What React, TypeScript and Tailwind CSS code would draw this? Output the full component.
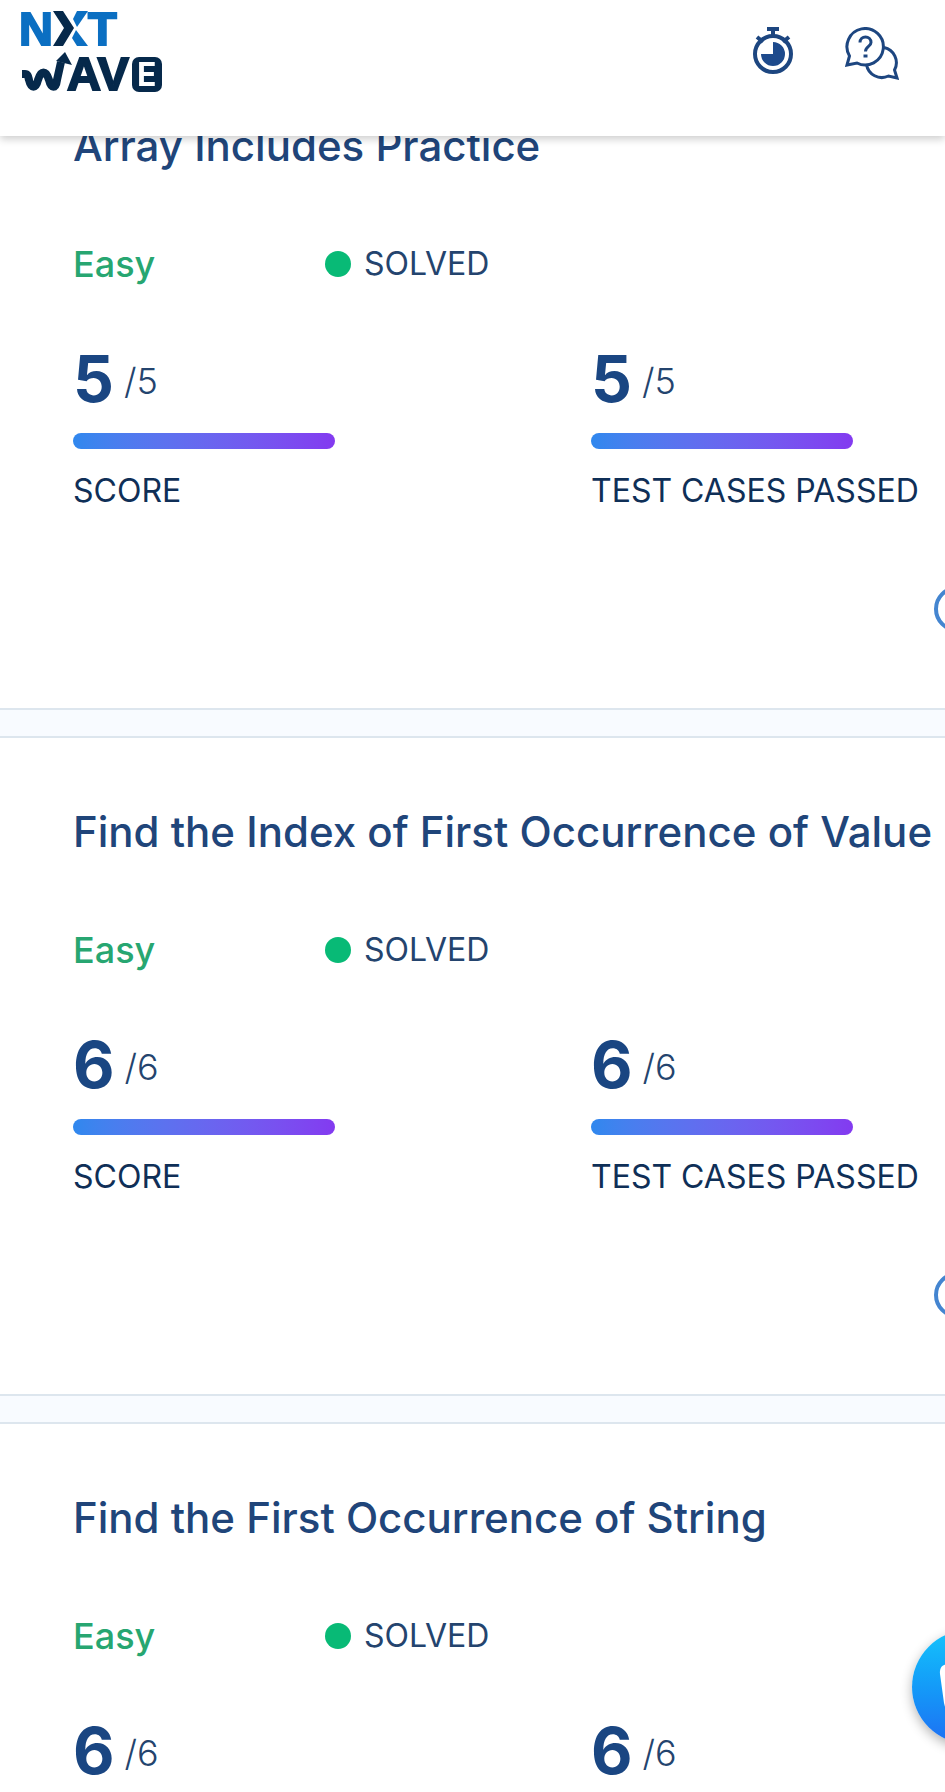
import type { ReactNode } from "react";

const challenges = [
   { title: "Array Includes Practice", level: "Easy", status: "SOLVED", score: 5, cases: 5 },
   { title: "Find the Index of First Occurrence of Value", level: "Easy", status: "SOLVED", score: 6, cases: 6 },
   { title: "Find the First Occurrence of String", level: "Easy", status: "SOLVED", score: 6, cases: 6 },
];

const Logo = () => (
   <svg width="170" height="110" viewBox="0 0 170 110" role="img" aria-label="NXT Wave">
      <g fontFamily="'Liberation Sans', Arial, sans-serif" fontWeight="700" fontSize="47" strokeWidth="2">
         <text x="19" y="45" fill="#0b6fc2" stroke="#0b6fc2">N</text>
         <text x="88" y="45" fill="#0b6fc2" stroke="#0b6fc2">T</text>
         <text x="67" y="90" fill="#06294b" stroke="#06294b">AV</text>
      </g>
      <path d="M53 11h10l11 17-11 18H53l11-18z" fill="#06294b" />
      <path d="M77 11h11L77 27l-4-8zM76 30l12 16H77l-5-8z" fill="#0b6fc2" />
      <path
         d="M22 74h3c3 0 3 2 4 6 2 9 7 9 9 0 3-10 8-10 11 0 2 9 7 9 8 0l4-18"
         fill="none"
         stroke="#06294b"
         strokeWidth="8"
      />
      <path d="M65 52l7 13-16-4z" fill="#06294b" />
      <rect x="132" y="57" width="30" height="35" rx="7" fill="#06294b" />
      <text x="137" y="86" fill="#fff" fontFamily="Inter, sans-serif" fontWeight="700" fontSize="32">E</text>
   </svg>
);

const TimerIcon = () => (
   <svg width="40" height="48" viewBox="0 0 40 48" fill="none" aria-hidden="true">
      <circle cx="20" cy="27" r="18" stroke="#1d4680" strokeWidth="4" />
      <path d="M14 0h12v4h-4v5h-4V4h-4z" fill="#1d4680" />
      <path d="M4 10l6 5M36 10l-6 5" stroke="#1d4680" strokeWidth="4" />
      <path d="M20 15a12 12 0 1 1-12 12h12z" fill="#1d4a8c" />
   </svg>
);

const HelpIcon = () => (
   <svg width="54" height="54" viewBox="0 0 54 54" fill="none" stroke="#1d4680" strokeWidth="3" aria-hidden="true">
      <path d="M4.500 29A18.200 18.200 0 1 1 12 36L2 38z" />
      <path d="M39 20.500a15.500 15.500 0 0 1 10.500 22.500l2.500 8-8.500-2a15.500 15.500 0 0 1-22-11.500" />
      <path d="M15 15.500c0-7.500 11-7.500 11 0 0 4-5.500 4-5.500 9" />
      <path d="M18.500 29h4" />
   </svg>
);

const Stat = ({ value, children }: { value: number; children: ReactNode }) => (
   <div className="w-[518px] shrink-0">
      <p className="flex h-16 items-center gap-[10px]">
         <span className="text-[64px] leading-16 font-bold text-[#1a4682]">{value}</span>
         <span className="pt-1 text-[36px] leading-10 font-light text-[#24446e]">/{value}</span>
      </p>
      <div className="mt-[22px] h-4 w-[262px] rounded-full bg-linear-to-r from-[#2f88ee] to-[#833af0]" />
      <p className="mt-[22px] text-[32px] leading-10 whitespace-nowrap text-[#0f2f57]">{children}</p>
   </div>
);

const ChallengeCard = ({ title, level, status, score, cases }: (typeof challenges)[number]) => (
   <article className="border-y-2 border-[#dde6ee] bg-white px-[73px] pt-[66px] pb-[76px]">
      <h2 className="text-[42px] leading-14 font-medium whitespace-nowrap text-[#20457a]">{title}</h2>
      <div className="mt-[66px] flex h-12 items-center">
         <span className="w-[252px] text-[36px] font-medium text-[#27a671]">{level}</span>
         <span className="flex items-center gap-[13px] text-[32px] text-[#24446e]">
            <span className="size-[26px] rounded-full bg-[#08ba76]" />
            {status}
         </span>
      </div>
      <div className="mt-[59px] flex">
         <Stat value={score}>SCORE</Stat>
         <Stat value={cases}>TEST CASES PASSED</Stat>
      </div>
      <button aria-label={`Open ${title}`} className="mt-[75px] ml-[861px] block size-[46px] rounded-full border-4 border-[#4485d0]" />
   </article>
);

const App = () => (
   <div className="h-screen overflow-hidden bg-[#f8fbff] font-['Inter',sans-serif]">
      <header className="fixed inset-x-0 top-0 z-10 flex h-[136px] items-start justify-between bg-white pr-[46px] shadow-[0_3px_8px_rgba(0,0,0,0.2)]">
         <a href="#" aria-label="Home">
            <Logo />
         </a>
         <div className="flex items-start gap-[52px] pt-[27px]">
            <button aria-label="Timer"><TimerIcon /></button>
            <button aria-label="Help"><HelpIcon /></button>
         </div>
      </header>

      <main className="flex flex-col gap-[26px] pt-[50px]">
         {challenges.map((challenge) => (
            <ChallengeCard key={challenge.title} {...challenge} />
         ))}
      </main>

      {/* Chat launcher, partly past the right edge */}
      <button aria-label="Chat" className="fixed -right-[81px] bottom-[48px] size-[114px] rounded-full bg-linear-to-b from-[#18c3fb] to-[#1f6ff3] shadow-[0_4px_12px_rgba(0,0,0,0.3)]">
         <svg viewBox="0 0 114 114" aria-hidden="true">
            <path d="M37 34h40q10 0 9 10l-4 29q-1 9-10 9H42q-9 0-10-9l-4-29q-1-10 9-10z" fill="#fff" />
         </svg>
      </button>
   </div>
);

export default App;
